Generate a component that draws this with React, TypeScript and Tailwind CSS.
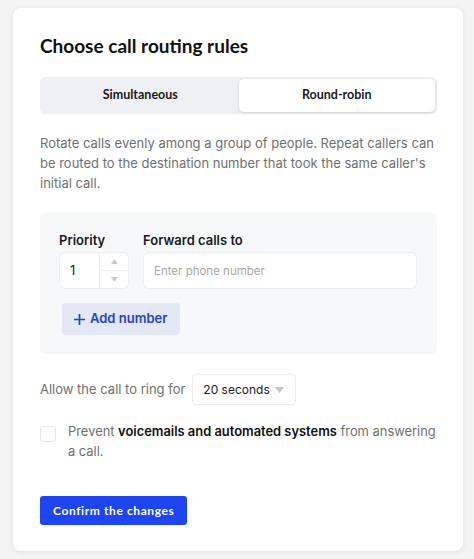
import { useState } from "react";

const heading = { fontFamily: "Lato, 'Open Sans', sans-serif" };
const body = { fontFamily: "Inter, 'Noto Sans', sans-serif" };

function Stepper({ value }: { value: number }) {
  return (
    <div className="flex h-[37px] w-[70px] overflow-hidden rounded-md border border-[#eceef2] bg-white">
      <div className="flex flex-1 items-center pl-[10px] text-[13px] text-[#222]">{value}</div>
      <div className="flex w-[29px] flex-col border-l border-[#eceef2]">
        <div className="flex flex-1 items-center justify-center border-b border-[#eceef2]">
          <svg width="7" height="5" viewBox="0 0 7 5">
            <path d="M3.5 0L7 5H0z" fill="#c9cbd0" />
          </svg>
        </div>
        <div className="flex flex-1 items-center justify-center">
          <svg width="7" height="5" viewBox="0 0 7 5">
            <path d="M0 0h7L3.5 5z" fill="#c9cbd0" />
          </svg>
        </div>
      </div>
    </div>
  );
}

export default function App() {
  const [mode, setMode] = useState<"simultaneous" | "round">("round");
  const [checked, setChecked] = useState(false);

  return (
    <div className="min-h-[559px] bg-[#f4f4f5] pt-[8px] pr-[11px] pb-[8px] pl-[13px]" style={body}>
      <div className="rounded-lg bg-white pt-[26px] pr-[26px] pb-[26px] pl-[27px] shadow-[0_1px_6px_rgba(0,0,0,0.08)]">
        <h1 className="text-[19px] font-bold leading-[24px] text-[#111]" style={heading}>
          Choose call routing rules
        </h1>

        <div className="mt-[19px] flex h-[37px] rounded-md bg-[#eef0f3] p-[2px]" style={heading}>
          <button
            onClick={() => setMode("simultaneous")}
            className={`flex-1 rounded-[5px] text-[12.5px] font-bold text-[#1a1a1a] ${
              mode === "simultaneous" ? "bg-white shadow-[0_1px_3px_rgba(0,0,0,0.15)]" : ""
            }`}
          >
            Simultaneous
          </button>
          <button
            onClick={() => setMode("round")}
            className={`flex-1 rounded-[5px] text-[12.5px] font-bold text-[#1a1a1a] ${
              mode === "round" ? "bg-white shadow-[0_1px_3px_rgba(0,0,0,0.15)]" : ""
            }`}
          >
            Round-robin
          </button>
        </div>

        <p className="mt-[19px] text-[13px] leading-[20px] text-[#707070]">
          Rotate calls evenly among a group of people. Repeat callers can be routed to the destination
          number that took the same caller's initial call.
        </p>

        <div className="mt-[19px] rounded-md bg-[#f7f8fa] pt-[19px] pr-[20px] pb-[19px] pl-[19px]">
          <div className="flex gap-[14px]">
            <div className="flex flex-col gap-[3px]">
              <label className="text-[13px] font-semibold leading-[18px] text-[#1a1a1a]">Priority</label>
              <Stepper value={1} />
            </div>
            <div className="flex flex-1 flex-col gap-[3px]">
              <label className="text-[13px] font-semibold leading-[18px] text-[#1a1a1a]">
                Forward calls to
              </label>
              <input
                placeholder="Enter phone number"
                className="h-[37px] w-full rounded-md border border-[#eceef2] bg-white px-[10px] text-[11.5px] text-[#222] outline-none placeholder:text-[#a8a8a8]"
              />
            </div>
          </div>
          <button className="mt-[14px] ml-[3px] flex h-[32px] w-[118px] items-center gap-[5px] rounded-[4px] bg-[#e4e8f4] pl-[12px] text-[13px] font-semibold text-[#2443c4]">
            <svg width="11" height="11" viewBox="0 0 11 11">
              <path d="M5.5 0.5v10M0.5 5.5h10" stroke="#2443c4" strokeWidth="1.7" strokeLinecap="round" />
            </svg>
            Add number
          </button>
        </div>

        <div className="mt-[20px] flex items-center gap-[7px]">
          <span className="text-[13px] text-[#707070]">Allow the call to ring for</span>
          <div className="flex h-[31px] w-[104px] items-center justify-between rounded-[4px] border border-[#eceef2] bg-white pr-[11px] pl-[10px]">
            <span className="text-[12px] text-[#222]">20 seconds</span>
            <svg width="9" height="6" viewBox="0 0 9 6">
              <path d="M0 0h9L4.5 6z" fill="#c4c6cb" />
            </svg>
          </div>
        </div>

        <label className="mt-[17px] flex cursor-pointer gap-[12px]">
          <input
            type="checkbox"
            checked={checked}
            onChange={(e) => setChecked(e.target.checked)}
            className="mt-[4px] h-[16px] w-[16px] shrink-0 appearance-none rounded-[3px] border border-[#e3e5e9] bg-white checked:bg-[#1f45f0]"
          />
          <span className="w-[380px] text-[12.9px] leading-[20px] text-[#707070]">
            Prevent <b className="font-semibold text-[#111]">voicemails and automated systems</b> from
            answering a call.
          </span>
        </label>

        <button
          className="mt-[34px] h-[29px] rounded-[3px] bg-[#1f45f0] px-[13px] text-[12px] font-bold tracking-[0.6px] text-white"
          style={heading}
        >
          Confirm the changes
        </button>
      </div>
    </div>
  );
}
